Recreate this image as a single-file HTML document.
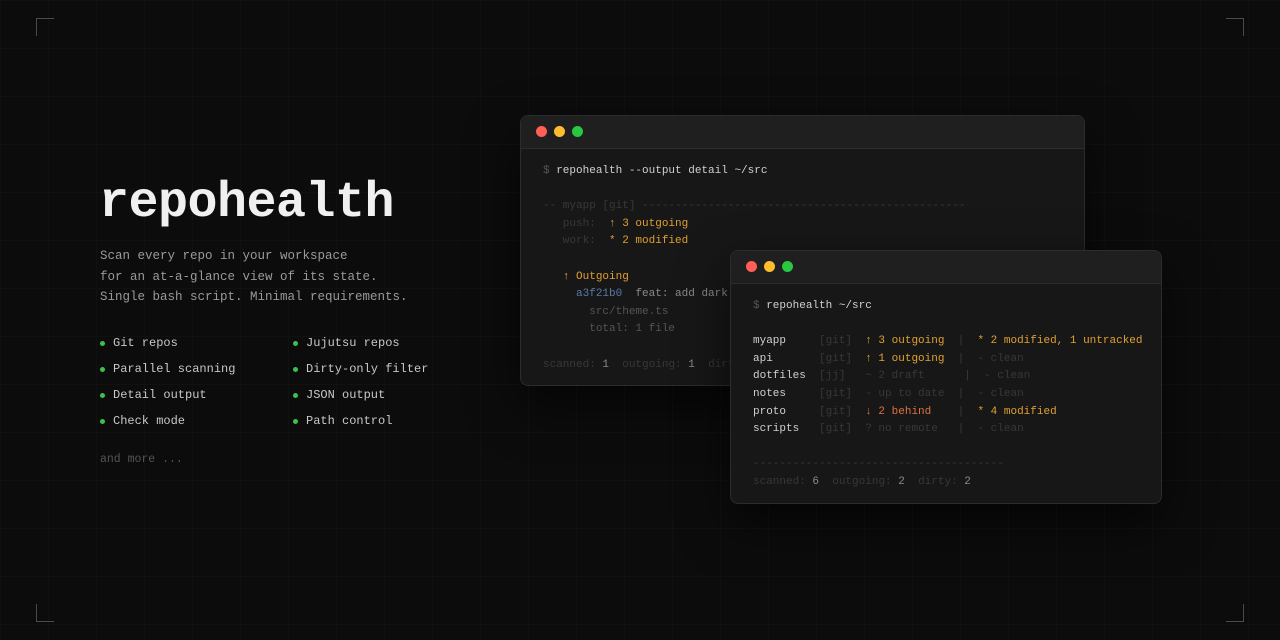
<!DOCTYPE html>
<html><head><meta charset="utf-8"><style>
*{margin:0;padding:0;box-sizing:border-box}
body{width:1280px;height:640px;overflow:hidden;background:#0c0c0c;font-family:"Liberation Mono",monospace;position:relative;
background-image:linear-gradient(#111 1px,transparent 1px),linear-gradient(90deg,#111 1px,transparent 1px);background-size:48px 48px;background-position:0 0}
.c{position:absolute;width:18px;height:18px;border-color:#4a4a4a;border-style:solid;border-width:0}
.title{position:absolute;left:99px;top:175px;font-size:50px;font-weight:bold;color:#f0f0f0;letter-spacing:-0.5px}
.desc{position:absolute;left:100px;top:246px;font-size:12.5px;line-height:20.5px;color:#9a9a9a;white-space:pre}
.f{position:absolute;font-size:12px;color:#c8c8c8;white-space:pre}
.f:before{content:"";position:absolute;left:-13px;top:5px;width:5px;height:5px;border-radius:50%;background:#3fbf4f}
.more{position:absolute;left:100px;top:453px;font-size:11.5px;color:#555}
.win{position:absolute;background:#171717;border:1px solid #2c2c2c;border-radius:8px;overflow:hidden;box-shadow:0 20px 50px rgba(0,0,0,.6)}
.tb{height:33px;background:#1f1f1f;border-bottom:1px solid #2c2c2c;position:relative}
.d{position:absolute;top:10px;width:11px;height:11px;border-radius:50%}
pre{font-family:"Liberation Mono",monospace;font-size:11px;line-height:17.6px;color:#d0d0d0;position:absolute}
.g{color:#555}.v{color:#383838}.o{color:#e0a030}.r{color:#e07040}.b{color:#5a7aa8}.m{color:#8a8a8a}
</style></head><body>
<div class="c" style="left:36px;top:18px;border-left-width:1px;border-top-width:1px"></div>
<div class="c" style="left:1226px;top:18px;border-right-width:1px;border-top-width:1px"></div>
<div class="c" style="left:36px;top:604px;border-left-width:1px;border-bottom-width:1px"></div>
<div class="c" style="left:1226px;top:604px;border-right-width:1px;border-bottom-width:1px"></div>

<div class="title">repohealth</div>
<div class="desc">Scan every repo in your workspace
for an at-a-glance view of its state.
Single bash script. Minimal requirements.</div>
<div class="f" style="left:113px;top:336px">Git repos</div>
<div class="f" style="left:113px;top:362px">Parallel scanning</div>
<div class="f" style="left:113px;top:388px">Detail output</div>
<div class="f" style="left:113px;top:414px">Check mode</div>
<div class="f" style="left:306px;top:336px">Jujutsu repos</div>
<div class="f" style="left:306px;top:362px">Dirty-only filter</div>
<div class="f" style="left:306px;top:388px">JSON output</div>
<div class="f" style="left:306px;top:414px">Path control</div>
<div class="more">and more ...</div>

<div class="win" style="left:520px;top:115px;width:565px;height:271px">
<div class="tb"><div class="d" style="left:15px;background:#ff5f57"></div><div class="d" style="left:33px;background:#febc2e"></div><div class="d" style="left:51px;background:#28c840"></div></div>
<pre style="left:22px;top:47px"><span class="g">$</span> repohealth --output detail ~/src

<span class="v">-- myapp [git] -------------------------------------------------</span>
<span class="v">   push:</span>  <span class="o">↑ 3 outgoing</span>
<span class="v">   work:</span>  <span class="o">* 2 modified</span>

   <span class="o">↑ Outgoing</span>
     <span class="b">a3f21b0</span>  <span class="m">feat: add dark mode</span>
       <span class="g">src/theme.ts</span>
       <span class="g">total: 1 file</span>

<span class="v">scanned:</span> <span class="m">1</span>  <span class="v">outgoing:</span> <span class="m">1</span>  <span class="v">dirty:</span> <span class="m">1</span></pre>
</div>

<div class="win" style="left:730px;top:250px;width:432px;height:254px">
<div class="tb"><div class="d" style="left:15px;background:#ff5f57"></div><div class="d" style="left:33px;background:#febc2e"></div><div class="d" style="left:51px;background:#28c840"></div></div>
<pre style="left:22px;top:47px"><span class="g">$</span> repohealth ~/src

myapp     <span class="v">[git]</span>  <span class="o">↑ 3 outgoing</span>  <span class="v">|</span>  <span class="o">* 2 modified, 1 untracked</span>
api       <span class="v">[git]</span>  <span class="o">↑ 1 outgoing</span>  <span class="v">|</span>  <span class="v">- clean</span>
dotfiles  <span class="v">[jj]</span>   <span class="v">~ 2 draft</span>      <span class="v">|</span>  <span class="v">- clean</span>
notes     <span class="v">[git]</span>  <span class="v">- up to date</span>  <span class="v">|</span>  <span class="v">- clean</span>
proto     <span class="v">[git]</span>  <span class="r">↓ 2 behind</span>    <span class="v">|</span>  <span class="o">* 4 modified</span>
scripts   <span class="v">[git]</span>  <span class="v">? no remote</span>   <span class="v">|</span>  <span class="v">- clean</span>

<span class="v">--------------------------------------</span>
<span class="v">scanned:</span> <span class="m">6</span>  <span class="v">outgoing:</span> <span class="m">2</span>  <span class="v">dirty:</span> <span class="m">2</span></pre>
</div>
</body></html>
